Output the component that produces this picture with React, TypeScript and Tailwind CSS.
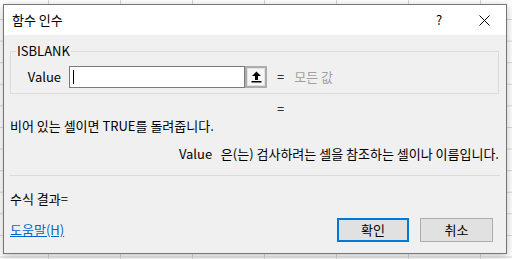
import React from "react";

function UpArrow() {
  return (
    <svg width="11" height="12" viewBox="0 0 11 12">
      <path d="M5.5 0.5 L10 5 H7 V9 H4 V5 H1 Z" fill="#000" />
      <rect x="0.5" y="10" width="10" height="1.5" fill="#000" />
    </svg>
  );
}

function CloseX() {
  return (
    <svg width="11" height="11" viewBox="0 0 11 11">
      <path d="M0.5 0.5 L10.5 10.5 M10.5 0.5 L0.5 10.5" stroke="#000" strokeWidth="1" fill="none" />
    </svg>
  );
}

export default function App() {
  return (
    <div className="relative w-[512px] h-[259px] overflow-hidden bg-white bg-[linear-gradient(to_right,#d6d6d6_1px,transparent_1px),linear-gradient(to_bottom,#d6d6d6_1px,transparent_1px)] [background-size:72px_21.6px] [background-position:48px_19px] pl-[3px] pt-[4px] font-['Noto_Sans_CJK_KR','Noto_Sans',sans-serif] text-[13px] leading-[16px] text-black">
      <div className="w-[504px] h-[250px] border border-[#767676] shadow-[0_2px_8px_rgba(0,0,0,0.25)] flex flex-col">
        {/* Title bar */}
        <div className="h-[30px] bg-white flex items-center pl-[8px] shrink-0">
          <span>함수 인수</span>
          <div className="flex-1" />
          <span className="text-[13px] w-[12px] text-center mr-[34px]">?</span>
          <div className="mr-[16px] flex items-center"><CloseX /></div>
        </div>
        {/* Body */}
        <div className="flex-1 bg-[#f0f0f0] flex flex-col px-[6px]">
          <fieldset className="border border-[#dcdcdc] w-[489px] mt-[8px] pb-[5px]">
            <legend className="ml-[5px] px-[1px] leading-[16px]">ISBLANK</legend>
            <div className="flex items-center h-[22px] mt-[7px]">
              <span className="w-[50px] text-right">Value</span>
              <div className="ml-[8px] w-[176px] h-[22px] border border-[#7a7a7a] bg-white flex items-center pl-[3px]">
                <span className="w-[1px] h-[14px] bg-black" />
              </div>
              <div className="w-[22px] h-[22px] border-2 border-[#acacac] bg-[#e3e3e3] flex items-center justify-center">
                <div className="w-[16px] h-[16px] bg-[#f7f7f7] flex items-center justify-center">
                  <UpArrow />
                </div>
              </div>
              <span className="ml-[10px]">=</span>
              <span className="ml-[10px] text-[#a0a0a0]">모든 값</span>
            </div>
          </fieldset>
          <div className="mt-[7px] pl-[267px]">=</div>
          <div className="mt-[1px]">비어 있는 셀이면 TRUE를 돌려줍니다.</div>
          <div className="mt-[12px] text-right pr-[1px]">Value&nbsp;&nbsp;&nbsp;은(는) 검사하려는 셀을 참조하는 셀이나 이름입니다.</div>
          <div className="mt-[13px] h-px bg-[#dadada] w-[490px]" />
          <div className="mt-[15px]">수식 결과=</div>
          <div className="mt-[11px] flex items-center">
            <span className="text-[#0066cc] underline">도움말(H)</span>
            <div className="flex-1" />
            <div className="w-[72px] h-[24px] border-2 border-[#0078d7] bg-[#e1e1e1] flex items-center justify-center">확인</div>
            <div className="ml-[11px] mr-[7px] w-[73px] h-[24px] border border-[#adadad] bg-[#e1e1e1] flex items-center justify-center">취소</div>
          </div>
        </div>
      </div>
    </div>
  );
}
